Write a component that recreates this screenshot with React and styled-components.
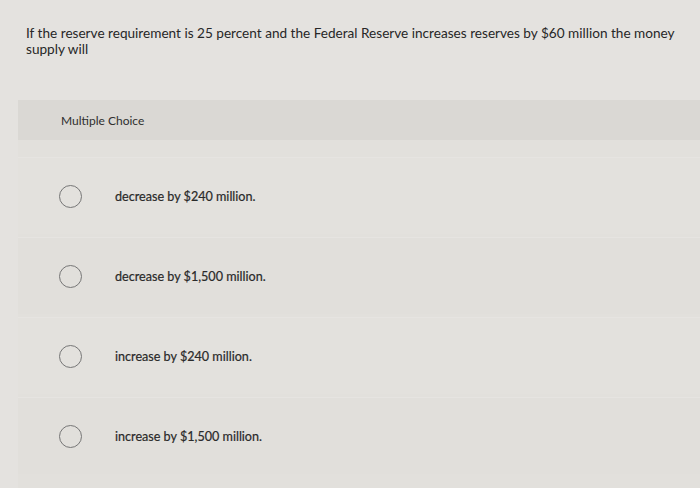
import React from 'react';
import styled, { createGlobalStyle } from 'styled-components';

const GlobalStyle = createGlobalStyle`
  html, body {
    margin: 0;
    padding: 0;
    background: #e4e2df;
  }
  body {
    font-family: Lato, "Open Sans", "Liberation Sans", sans-serif;
    color: #2f2f2f;
  }
`;

const OPTIONS = [
  'decrease by $240 million.',
  'decrease by $1,500 million.',
  'increase by $240 million.',
  'increase by $1,500 million.',
];

const Page = styled.div`
  width: 700px;
  height: 488px;
  overflow: hidden;
  display: flex;
  flex-direction: column;
`;

const Question = styled.p`
  margin: 0;
  padding: 25px 16px 0 26px;
  height: 100px;
  flex: none;
  box-sizing: border-box;
  font-size: 13.6px;
  line-height: 16px;
  color: #272727;
`;

const Panel = styled.section`
  margin-left: 18px;
  flex: 1;
  background: #e2e0dc;
  display: flex;
  flex-direction: column;
`;

const PanelHead = styled.div`
  height: 40px;
  padding: 14px 0 0 43px;
  box-sizing: border-box;
  background: #dad8d4;
  font-size: 12px;
  line-height: 14px;
  color: #2f2f2f;
`;

const List = styled.div`
  display: flex;
  flex-direction: column;
  padding-top: 17px;
  gap: 3px;
`;

const Row = styled.label`
  height: 76px;
  display: flex;
  align-items: center;
  padding-left: 41px;
  background: ${(p) => (p.$odd ? '#e3e1dd' : '#e1dfdb')};
  border-top: 1px solid #e6e4e1;
`;

const Radio = styled.span`
  width: 21px;
  height: 21px;
  border: 1.6px solid #767676;
  border-radius: 50%;
  flex: none;
`;

const OptionText = styled.span`
  margin-left: 33px;
  font-size: 12.6px;
  color: #2a2a2a;
  -webkit-text-stroke: 0.2px #2a2a2a;
`;

export default function App() {
  return (
    <Page>
      <GlobalStyle />
      <Question>
        If the reserve requirement is 25 percent and the Federal Reserve increases reserves by $60 million the money
        supply will
      </Question>
      <Panel>
        <PanelHead>Multiple Choice</PanelHead>
        <List>
          {OPTIONS.map((text, i) => (
            <Row key={text} $odd={i % 2 === 0}>
              <Radio />
              <OptionText>{text}</OptionText>
            </Row>
          ))}
        </List>
      </Panel>
    </Page>
  );
}
